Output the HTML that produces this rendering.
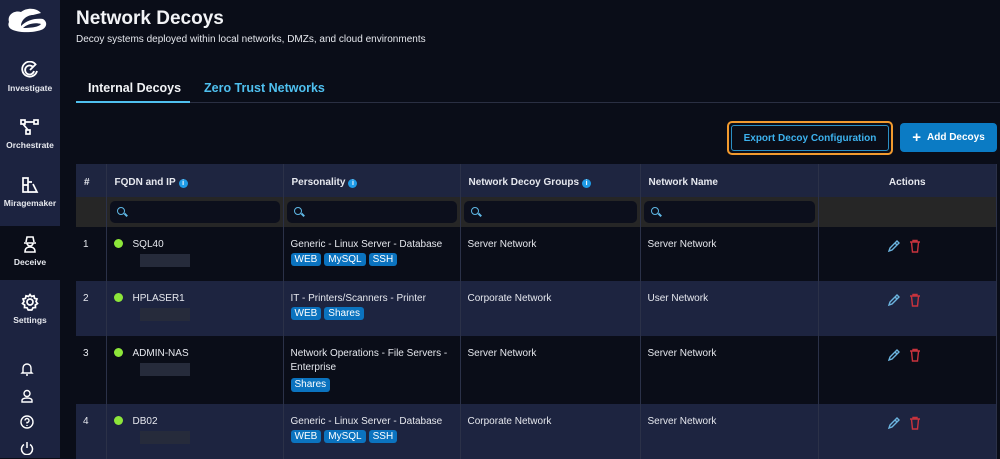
<!DOCTYPE html>
<html><head><meta charset="utf-8"><style>
*{box-sizing:border-box;margin:0;padding:0}
body{width:1000px;height:458px;overflow:hidden;background:#0a0d18;font-family:"Liberation Sans",sans-serif;color:#e6e8ee;position:relative}
.sb{position:absolute;left:0;top:0;width:60px;height:458px;background:#1c2340}
.ni{position:absolute;left:0;width:60px;text-align:center;font-size:8.5px;font-weight:bold;color:#e6e8ee}
.ni svg{display:block;margin:0 auto 4px}
.abs{position:absolute}
h1{position:absolute;left:76px;top:8px;font-size:19px;font-weight:bold;color:#f2f3f6}
.sub{position:absolute;left:76px;top:34px;font-size:10px;color:#e6e8ee}
.tab{position:absolute;top:81px;font-size:12.5px;font-weight:bold}
table{position:absolute;left:76px;top:164px;width:921px;border-collapse:collapse;font-size:10px}
td,th{border-right:1px solid #2b3148;vertical-align:top;text-align:left}
th{height:33px;background:#1e2540;font-weight:bold;padding:3px 8px 0;vertical-align:middle}
.f td{height:30px;background:#262626;padding:4px 3px;vertical-align:middle}
.sr{height:22px;background:#0c0f1c;border-radius:5px;position:relative}
.sr:before{content:"";position:absolute;left:7px;top:6px;width:6px;height:6px;border:1.5px solid #5fb8e6;border-radius:50%}
.sr:after{content:"";position:absolute;left:14px;top:13px;width:4px;height:1.5px;background:#5fb8e6;transform:rotate(45deg)}
.r td{padding:12px 7px 0}
.d td{background:#0a0d18}.l td{background:#1d2440}
.dot{display:inline-block;width:9px;height:9px;border-radius:50%;background:#8de63a;margin-right:10px;vertical-align:-1px}
.blur{margin:4px 0 0 26px;width:50px;height:13px;background:#262b3b}
.tg{display:inline-block;background:#0b73bf;color:#fff;border-radius:3px;padding:1px 4px;margin:3px 3px 0 0;font-size:10px}
.i{display:inline-block;width:9px;height:9px;border-radius:50%;background:#1e9be6;color:#fff;font-size:7px;text-align:center;line-height:9px;margin-left:3px;vertical-align:0}
</style></head><body>
<div class="sb">
 <svg class="abs" style="left:5px;top:6px" width="44" height="30" viewBox="0 0 44 30"><path d="M4 16C2 9 9 4 16 6C22 1 32 2 36 7L28 9C22 9 16 14 16 20C22 14 30 12 38 13C43 16 42 22 36 24C28 27 12 27 6 23C3 21 3 18 4 16Z" fill="#fff"/><path d="M18 22C22 18 30 16 36 18C34 21 26 22 18 22Z" fill="#1c2340"/></svg>
 <div class="ni" style="top:61px"><svg width="18" height="18" viewBox="0 0 18 18" fill="none" stroke="#fff" stroke-width="1.8"><path d="M15 4A7.5 7.5 0 1 0 16 10"/><path d="M12 6A4.5 4.5 0 1 0 13 10"/><path d="M9 9L15 3"/></svg>Investigate</div>
 <div class="ni" style="top:118px"><svg width="20" height="18" viewBox="0 0 20 18" fill="none" stroke="#fff" stroke-width="1.7"><rect x="1" y="2" width="4" height="4"/><rect x="14" y="2" width="4" height="4"/><rect x="6" y="12" width="4" height="4"/><path d="M5 4H14M3 6L8 12"/></svg>Orchestrate</div>
 <div class="ni" style="top:176px"><svg width="18" height="18" viewBox="0 0 18 18" fill="none" stroke="#fff" stroke-width="1.7"><rect x="2" y="2" width="5" height="14"/><path d="M7 6H11M2 9H7M7 16H16L12 8"/></svg>Miragemaker</div>
 <div style="position:absolute;left:0;top:226px;width:60px;height:54px;background:#0a0d18"></div>
 <div class="ni" style="top:235px"><svg width="18" height="18" viewBox="0 0 18 18" fill="none" stroke="#fff" stroke-width="1.6"><path d="M5 7L6 2H12L13 7M3 8H15M6 8A3 3 0 0 0 12 8M4 17C4 13 6 12 9 12C12 12 14 13 14 17Z"/></svg>Deceive</div>
 <div class="ni" style="top:293px"><svg width="18" height="18" viewBox="0 0 18 18" fill="none" stroke="#fff" stroke-width="1.7"><circle cx="9" cy="9" r="3"/><path d="M9 1.5L10.5 3.5L13 2.8L13.5 5.3L16 6L15 8.5L16.5 10.5L14.3 12L14.5 14.6L12 14.7L10.8 17H7.2L6 14.7L3.5 14.6L3.7 12L1.5 10.5L3 8.5L2 6L4.5 5.3L5 2.8L7.5 3.5Z"/></svg>Settings</div>
 <svg class="abs" style="left:20px;top:362px" width="14" height="14" viewBox="0 0 14 14" fill="none" stroke="#fff" stroke-width="1.4"><path d="M3 10V6A4 4 0 0 1 11 6V10L12 11H2Z M6 13H8"/></svg>
 <svg class="abs" style="left:20px;top:389px" width="14" height="14" viewBox="0 0 14 14" fill="none" stroke="#fff" stroke-width="1.4"><circle cx="7" cy="4.5" r="3"/><path d="M2 13V11.5C2 10 4 9 7 9C10 9 12 10 12 11.5V13Z"/></svg>
 <svg class="abs" style="left:20px;top:415px" width="14" height="14" viewBox="0 0 14 14" fill="none" stroke="#fff" stroke-width="1.4"><circle cx="7" cy="7" r="6"/><path d="M5 5.5A2 2 0 1 1 7 7.5V8.5M7 10V11"/></svg>
 <svg class="abs" style="left:20px;top:441px" width="14" height="14" viewBox="0 0 14 14" fill="none" stroke="#fff" stroke-width="1.5"><path d="M4 3.5A5.5 5.5 0 1 0 10 3.5M7 1V7"/></svg>
</div>
<h1>Network Decoys</h1>
<div class="sub">Decoy systems deployed within local networks, DMZs, and cloud environments</div>
<div class="tab" style="left:88px;color:#f2f3f6">Internal Decoys</div>
<div class="tab" style="left:204px;color:#4fc0ef">Zero Trust Networks</div>
<div class="abs" style="left:76px;top:102px;width:924px;height:1px;background:#2a2f42"></div>
<div class="abs" style="left:76px;top:101px;width:114px;height:2px;background:#4fc0ef"></div>
<div class="abs" style="left:727px;top:121px;width:166px;height:34px;border:2px solid #f29a2e;border-radius:5px;padding:2px"><div style="border:1px solid #2b8fc4;border-radius:3px;height:26px;line-height:26px;text-align:center;font-size:10px;font-weight:bold;color:#3db2ee">Export Decoy Configuration</div></div>
<div class="abs" style="left:900px;top:123px;width:97px;height:29px;background:#0b7bc4;border-radius:4px;color:#fff;font-size:10px;font-weight:bold;line-height:30px;text-align:center"><span style="font-size:15px;vertical-align:-2px;margin-right:6px">+</span>Add Decoys</div>
<table>
<tr><th style="width:30px">#</th><th style="width:177px">FQDN and IP<span class="i">i</span></th><th style="width:177px">Personality<span class="i">i</span></th><th style="width:180px">Network Decoy Groups<span class="i">i</span></th><th style="width:178px">Network Name</th><th style="text-align:center">Actions</th></tr>
<tr class="f"><td></td><td><div class="sr"></div></td><td><div class="sr"></div></td><td><div class="sr"></div></td><td><div class="sr"></div></td><td></td></tr>
<tr class="r d" style="height:54px"><td>1</td><td><span class="dot"></span>SQL40<div class="blur"></div></td><td>Generic - Linux Server - Database<br><span class="tg">WEB</span><span class="tg">MySQL</span><span class="tg">SSH</span></td><td>Server Network</td><td>Server Network</td><td style="text-align:center">ACT</td></tr>
<tr class="r l" style="height:55px"><td>2</td><td><span class="dot"></span>HPLASER1<div class="blur"></div></td><td>IT - Printers/Scanners - Printer<br><span class="tg">WEB</span><span class="tg">Shares</span></td><td>Corporate Network</td><td>User Network</td><td style="text-align:center">ACT</td></tr>
<tr class="r d" style="height:68px"><td>3</td><td><span class="dot"></span>ADMIN-NAS<div class="blur"></div></td><td style="line-height:14px;padding-top:11px">Network Operations - File Servers - Enterprise<br><span class="tg" style="line-height:12px">Shares</span></td><td>Server Network</td><td>Server Network</td><td style="text-align:center">ACT</td></tr>
<tr class="r l" style="height:55px"><td>4</td><td><span class="dot"></span>DB02<div class="blur"></div></td><td>Generic - Linux Server - Database<br><span class="tg">WEB</span><span class="tg">MySQL</span><span class="tg">SSH</span></td><td>Corporate Network</td><td>Server Network</td><td style="text-align:center">ACT</td></tr>
</table>
<script>
document.querySelectorAll('td').forEach(function(t){if(t.textContent==='ACT'){t.innerHTML='<svg width="40" height="14" viewBox="0 0 40 14" fill="none" stroke-width="1.4"><path stroke="#6cb5e0" d="M2 12L3 9L10 2L12 4L5 11Z M8 4L10 6"/><path stroke="#c8333d" d="M23 3H33M26 3V1.5H30V3M24.5 3.5L25.5 13H30.5L31.5 3.5"/></svg>';}});
</script>
</body></html>
